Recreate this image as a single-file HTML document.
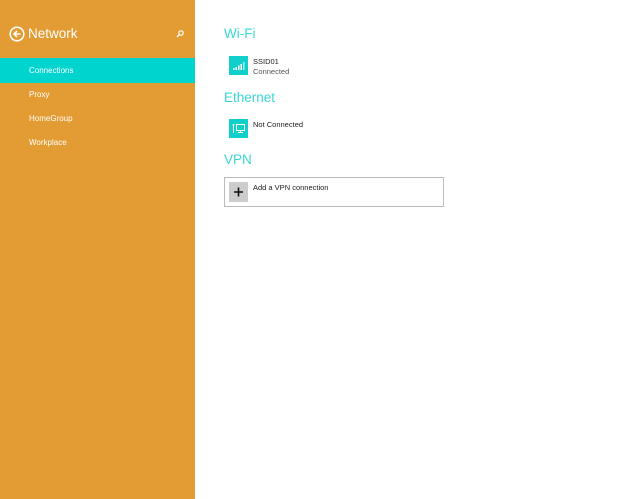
<html><head><style>
body{margin:0;width:624px;height:499px;position:relative;font-family:"Liberation Sans",sans-serif;background:#fff;overflow:hidden}
.side{position:absolute;left:0;top:0;width:195px;height:499px;background:#E39C33}
.t{position:absolute;white-space:nowrap}
.nav{position:absolute;left:29px;font-size:8px;color:#fff}
.h{position:absolute;left:224px;font-size:13.5px;color:#3ad8d4}
.ic{position:absolute;left:229px;width:19px;height:19px;background:#11d0cc}
.s{font-size:7.5px;color:#222}
</style></head><body>
<div class="side">
<svg style="position:absolute;left:9px;top:26px" width="16" height="16" viewBox="0 0 16 16"><circle cx="8" cy="8" r="6.8" fill="none" stroke="#fff" stroke-width="1.5"/><path d="M11.5 8H5M8 5L5 8L8 11" fill="none" stroke="#fff" stroke-width="1.6"/></svg>
<div class="t" style="left:28px;top:26px;font-size:13.5px;color:#fff">Network</div>
<svg style="position:absolute;left:176px;top:30px" width="8" height="8" viewBox="0 0 8 8"><circle cx="5" cy="3" r="2.2" fill="none" stroke="#fff" stroke-width="1.2"/><path d="M3.5 4.5L1 7" stroke="#fff" stroke-width="1.4"/></svg>
<div style="position:absolute;left:0;top:58px;width:195px;height:25px;background:#00D4CF"></div>
<div class="nav t" style="top:66px">Connections</div>
<div class="nav t" style="top:90px">Proxy</div>
<div class="nav t" style="top:114px">HomeGroup</div>
<div class="nav t" style="top:138px">Workplace</div>
</div>
<div class="h t" style="top:26px">Wi-Fi</div>
<div class="ic" style="top:56px"><svg width="19" height="19"><g fill="#fff"><rect x="4" y="12" width="1.5" height="2"/><rect x="6.5" y="11" width="1.5" height="3"/><rect x="9" y="9.5" width="1.5" height="4.5"/><rect x="11.5" y="8" width="1.5" height="6"/><rect x="14" y="6" width="1.5" height="8" opacity=".6"/></g></svg></div>
<div class="t s" style="left:253px;top:57px">SSID01</div>
<div class="t s" style="left:253px;top:67px;color:#555">Connected</div>
<div class="h t" style="top:90px">Ethernet</div>
<div class="ic" style="top:119px"><svg width="19" height="19"><g fill="none" stroke="#fff" stroke-width="1"><rect x="7.5" y="5.5" width="8" height="6"/><path d="M11.5 11.5v2M9 13.5h5M4.5 5v9M3.5 6h2"/></g></svg></div>
<div class="t s" style="left:253px;top:120px">Not Connected</div>
<div class="h t" style="top:152px">VPN</div>
<div style="position:absolute;left:224px;top:177px;width:218px;height:28px;border:1px solid #bbb"></div>
<div style="position:absolute;left:229px;top:182px;width:19px;height:20px;background:#ccc"><svg width="19" height="20"><path d="M9.5 5.5v9M5 10h9" stroke="#111" stroke-width="1.6"/></svg></div>
<div class="t s" style="left:253px;top:183px">Add a VPN connection</div>
</body></html>
